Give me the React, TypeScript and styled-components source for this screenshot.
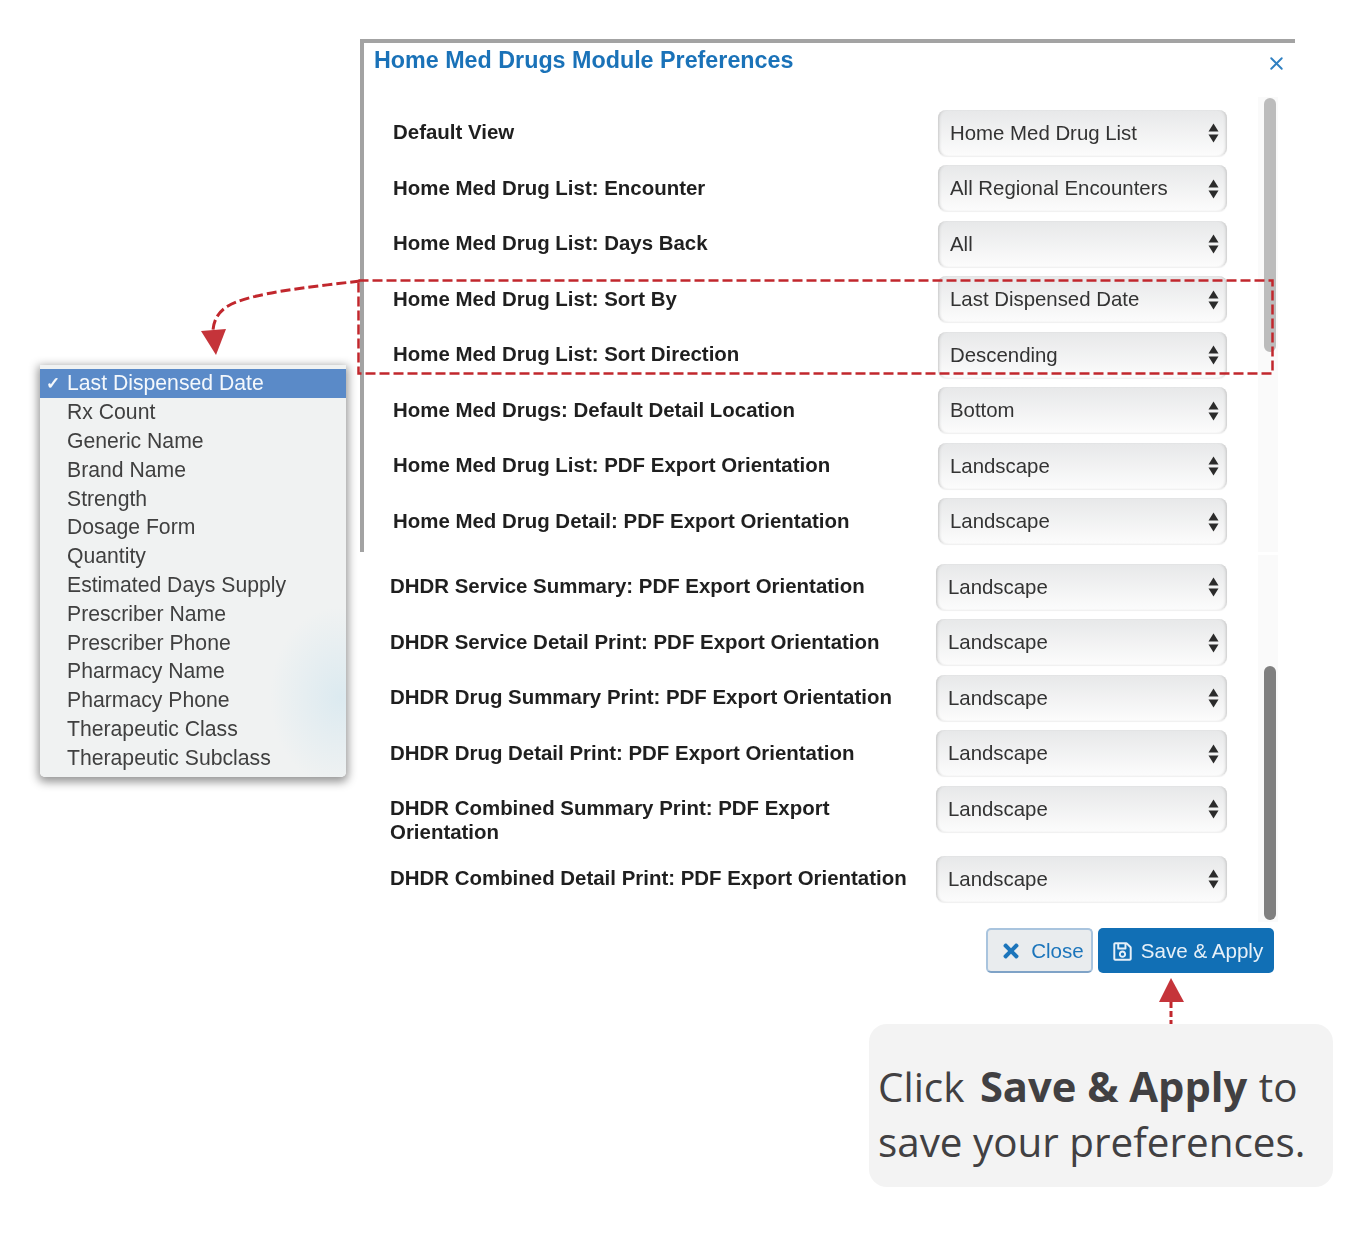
import React from 'react';
import styled, { createGlobalStyle } from 'styled-components';
import { FaTimes, FaRegSave } from 'react-icons/fa';
import { X } from 'lucide-react';

const homeRows = [
  ['Default View', 'Home Med Drug List'],
  ['Home Med Drug List: Encounter', 'All Regional Encounters'],
  ['Home Med Drug List: Days Back', 'All'],
  ['Home Med Drug List: Sort By', 'Last Dispensed Date'],
  ['Home Med Drug List: Sort Direction', 'Descending'],
  ['Home Med Drugs: Default Detail Location', 'Bottom'],
  ['Home Med Drug List: PDF Export Orientation', 'Landscape'],
  ['Home Med Drug Detail: PDF Export Orientation', 'Landscape'],
];

const dhdrRows = [
  ['DHDR Service Summary: PDF Export Orientation', 'Landscape'],
  ['DHDR Service Detail Print: PDF Export Orientation', 'Landscape'],
  ['DHDR Drug Summary Print: PDF Export Orientation', 'Landscape'],
  ['DHDR Drug Detail Print: PDF Export Orientation', 'Landscape'],
  ['DHDR Combined Summary Print: PDF Export Orientation', 'Landscape'],
  ['DHDR Combined Detail Print: PDF Export Orientation', 'Landscape'],
];

const sortOptions = [
  'Last Dispensed Date', 'Rx Count', 'Generic Name', 'Brand Name', 'Strength', 'Dosage Form',
  'Quantity', 'Estimated Days Supply', 'Prescriber Name', 'Prescriber Phone', 'Pharmacy Name',
  'Pharmacy Phone', 'Therapeutic Class', 'Therapeutic Subclass',
];

const Stepper = () => (
  <svg width="11" height="20" viewBox="0 0 11 20">
    <path d="M5.5 0.5 L10.5 8.5 H0.5 Z M5.5 19.5 L0.5 11.5 H10.5 Z" fill="#2b2b2b" />
  </svg>
);

const PrefRow = ({ label, value, wide }: { label: string; value: string; wide?: boolean }) => (
  <Row>
    <Label $wide={wide}>{label}</Label>
    <Select $wide={wide}>
      <span>{value}</span>
      <Stepper />
    </Select>
  </Row>
);

export default () => (
  <Page>
    <Global />
    <MenuColumn>
      <Menu>
        {sortOptions.map((o, i) => (
          <MenuItem key={o} $active={i === 0}>
            <Check>{i === 0 ? '✓' : ''}</Check>
            {o}
          </MenuItem>
        ))}
      </Menu>
    </MenuColumn>

    <MainColumn>
      <Dialog>
        <UpperPane>
          <Head>
            <Title>Home Med Drugs Module Preferences</Title>
            <Dismiss><X size={21} strokeWidth={2.2} /></Dismiss>
          </Head>
          <Section $first>
            <Rows $left={29} $top={8}>
              {homeRows.map(r => <PrefRow key={r[0]} label={r[0]} value={r[1]} />)}
            </Rows>
            <Track><Thumb $top={1} $height={254} $color="#bcbcbc" /></Track>
          </Section>
        </UpperPane>
        <Section>
          <Rows $left={30} $top={4}>
            {dhdrRows.map(r => <PrefRow key={r[0]} label={r[0]} value={r[1]} wide />)}
          </Rows>
          <Track><Thumb $top={111} $height={254} $color="#808080" /></Track>
        </Section>
        <Footer>
          <CloseButton><FaTimes size={22} /> Close</CloseButton>
          <SaveButton><FaRegSave size={21} /> Save &amp; Apply</SaveButton>
        </Footer>
      </Dialog>

      <Callout>
        Click <b>Save &amp; Apply</b> to<br />save your preferences.
      </Callout>
    </MainColumn>

    <Annotations viewBox="0 0 1355 1234">
      <rect x="358.5" y="280.5" width="914" height="93" fill="none" stroke="#c1272d" strokeWidth="2.5" strokeDasharray="10 4" />
      <path d="M360 281 C 310 287 250 293 228 306 C 218 312 214 320 213 330" fill="none" stroke="#c1272d" strokeWidth="3" strokeDasharray="10 4" />
      <path d="M201 331 L226 329 L216 355 Z" fill="#c5343a" />
      <path d="M1159 1002 H1184 L1171 978 Z" fill="#c5343a" />
      <path d="M1171 1002 V1024" fill="none" stroke="#c1272d" strokeWidth="3" strokeDasharray="6 3" />
    </Annotations>
  </Page>
);

const Global = createGlobalStyle`
  html, body { margin: 0; padding: 0; background: #fff; }
`;

const Page = styled.div`
  position: relative;
  width: 1355px;
  height: 1234px;
  overflow: hidden;
  display: grid;
  grid-template-columns: 360px 995px;
  padding-top: 39px;
  box-sizing: border-box;
  font-family: "Liberation Sans", Arial, sans-serif;
  background: #fff;
`;

const MenuColumn = styled.div`
  padding: 326px 14px 0 40px;
`;

const Menu = styled.div`
  width: 306px;
  height: 412px;
  box-sizing: border-box;
  padding-top: 4px;
  border-radius: 0 0 5px 5px;
  background: radial-gradient(ellipse 70px 90px at 300px 332px, #dceaf0 0, #f0f2f2 100%);
  box-shadow: 0 3px 10px 2px rgba(0, 0, 0, .42);
  filter: blur(.5px);
`;

const MenuItem = styled.div<{ $active?: boolean }>`
  display: flex;
  align-items: center;
  height: 28.8px;
  font-size: 21.2px;
  color: ${p => (p.$active ? '#f4f8fc' : '#404040')};
  background: ${p => (p.$active ? '#5a8ac8' : 'transparent')};
`;

const Check = styled.span`
  width: 27px;
  padding-left: 6px;
  box-sizing: border-box;
  font-size: 17px;
  font-weight: bold;
`;

const MainColumn = styled.div`
  display: flex;
  flex-direction: column;
`;

const Dialog = styled.div`
  width: 935px;
  border-top: 4px solid #a3a3a3;
  filter: blur(.6px);
`;

const UpperPane = styled.div`
  border-left: 4px solid #a3a3a3;
`;

const Head = styled.div`
  display: flex;
  justify-content: space-between;
  height: 54px;
  padding: 1px 8px 0 10px;
  box-sizing: border-box;
`;

const Title = styled.div`
  font-size: 23.3px;
  line-height: 32px;
  font-weight: bold;
  color: #1a72b8;
`;

const Dismiss = styled.div`
  padding-top: 9px;
  color: #2f80c2;
`;

const Section = styled.div<{ $first?: boolean }>`
  display: flex;
  height: ${p => (p.$first ? 455 : 367)}px;
  margin-top: ${p => (p.$first ? 0 : 3)}px;
  padding-right: 17px;
`;

const Rows = styled.div<{ $left: number; $top: number }>`
  flex: 1;
  padding: ${p => p.$top}px 31px 0 ${p => p.$left}px;
`;

const Row = styled.div`
  display: flex;
  justify-content: space-between;
  align-items: flex-start;
`;

const Label = styled.div<{ $wide?: boolean }>`
  width: ${p => (p.$wide ? 524 : 540)}px;
  padding: 15px 0 7px;
  font-size: 20.45px;
  line-height: 24px;
  font-weight: bold;
  color: #1f1f1f;
`;

const Select = styled.div<{ $wide?: boolean }>`
  display: flex;
  align-items: center;
  justify-content: space-between;
  flex: none;
  width: ${p => (p.$wide ? 291 : 289)}px;
  height: 46px;
  margin: 4.75px 0;
  padding: 1px 8px 0 12px;
  box-sizing: border-box;
  border-radius: 8px;
  font-size: 20.4px;
  color: #333;
  background: linear-gradient(#e7e8e9, #fcfcfc);
  box-shadow: inset 3px 0 3px -2px #c4c4c4, inset -3px 0 3px -2px #c4c4c4, 0 1px 1px #f0f0f0;
`;

const Track = styled.div`
  flex: none;
  width: 20px;
  box-sizing: border-box;
  padding: 0 2px 0 6px;
  background: #fafafa;
`;

const Thumb = styled.div<{ $top: number; $height: number; $color: string }>`
  margin-top: ${p => p.$top}px;
  height: ${p => p.$height}px;
  border-radius: 6px;
  background: ${p => p.$color};
`;

const Footer = styled.div`
  display: flex;
  justify-content: flex-end;
  gap: 5px;
  padding: 6px 21px 0 0;
`;

const CloseButton = styled.div`
  display: flex;
  align-items: center;
  justify-content: center;
  gap: 9px;
  width: 107px;
  height: 45px;
  padding: 1px 0 0 5px;
  box-sizing: border-box;
  border: 2px solid #a9c4de;
  border-bottom-color: #7fa3c7;
  border-radius: 5px;
  font-size: 20.6px;
  color: #1c75bb;
  background: #e9ecee;
`;

const SaveButton = styled.div`
  display: flex;
  align-items: center;
  justify-content: center;
  gap: 8px;
  width: 176px;
  height: 45px;
  padding: 1px 0 0 3px;
  box-sizing: border-box;
  border-radius: 5px;
  font-size: 20.6px;
  color: #e6f0f8;
  background: #116fb5;
`;

const Callout = styled.div`
  width: 464px;
  height: 163px;
  margin: 51px 0 0 509px;
  padding: 34px 0 0 9px;
  box-sizing: border-box;
  border-radius: 18px;
  font-family: "Open Sans", sans-serif;
  font-size: 40.4px;
  line-height: 55px;
  color: #414042;
  background: #f3f3f3;
  b { font-weight: 700; font-size: 41.7px; margin: 0 1px 0 5px; }
`;

const Annotations = styled.svg`
  position: absolute;
  left: 0;
  top: 0;
  width: 1355px;
  height: 1234px;
  pointer-events: none;
`;
